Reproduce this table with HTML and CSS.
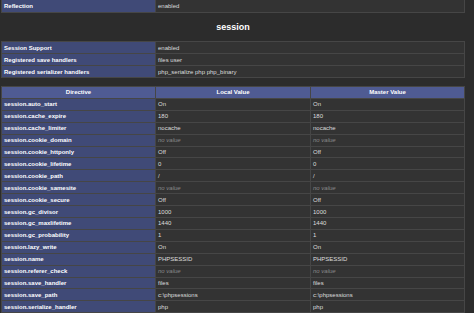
FILE: index.html
```html
<!DOCTYPE html>
<html lang="en">
<head>
<meta charset="utf-8">
<title>phpinfo() - session</title>
<link rel="stylesheet" href="styles.css">
</head>
<body>
<div class="page">
  <div class="info info-2 info-top">
    <div class="cell e">Reflection</div><div class="cell v">enabled</div>
  </div>
  <h2 class="section-title">session</h2>
  <div class="info info-2">
    <div class="cell e">Session Support</div><div class="cell v">enabled</div>
    <div class="cell e">Registered save handlers</div><div class="cell v">files user</div>
    <div class="cell e">Registered serializer handlers</div><div class="cell v">php_serialize php php_binary</div>
  </div>
  <div class="info info-3 directives">
    <div class="cell h">Directive</div><div class="cell h">Local Value</div><div class="cell h">Master Value</div>
    <div class="cell e">session.auto_start</div><div class="cell v">On</div><div class="cell v">On</div>
    <div class="cell e">session.cache_expire</div><div class="cell v">180</div><div class="cell v">180</div>
    <div class="cell e">session.cache_limiter</div><div class="cell v">nocache</div><div class="cell v">nocache</div>
    <div class="cell e">session.cookie_domain</div><div class="cell v"><i>no value</i></div><div class="cell v"><i>no value</i></div>
    <div class="cell e">session.cookie_httponly</div><div class="cell v">Off</div><div class="cell v">Off</div>
    <div class="cell e">session.cookie_lifetime</div><div class="cell v">0</div><div class="cell v">0</div>
    <div class="cell e">session.cookie_path</div><div class="cell v">/</div><div class="cell v">/</div>
    <div class="cell e">session.cookie_samesite</div><div class="cell v"><i>no value</i></div><div class="cell v"><i>no value</i></div>
    <div class="cell e">session.cookie_secure</div><div class="cell v">Off</div><div class="cell v">Off</div>
    <div class="cell e">session.gc_divisor</div><div class="cell v">1000</div><div class="cell v">1000</div>
    <div class="cell e">session.gc_maxlifetime</div><div class="cell v">1440</div><div class="cell v">1440</div>
    <div class="cell e">session.gc_probability</div><div class="cell v">1</div><div class="cell v">1</div>
    <div class="cell e">session.lazy_write</div><div class="cell v">On</div><div class="cell v">On</div>
    <div class="cell e">session.name</div><div class="cell v">PHPSESSID</div><div class="cell v">PHPSESSID</div>
    <div class="cell e">session.referer_check</div><div class="cell v"><i>no value</i></div><div class="cell v"><i>no value</i></div>
    <div class="cell e">session.save_handler</div><div class="cell v">files</div><div class="cell v">files</div>
    <div class="cell e">session.save_path</div><div class="cell v">c:\phpsessions</div><div class="cell v">c:\phpsessions</div>
    <div class="cell e">session.serialize_handler</div><div class="cell v">php</div><div class="cell v">php</div>
  </div>
</div>
</body>
</html>
```

FILE: styles.css
```css
html, body {
  margin: 0;
  padding: 0;
  background: #2c2c2c;
}

body {
  font-family: "Liberation Sans", Arial, Helvetica, sans-serif;
  font-size: 6px;
  color: #dddddd;
  overflow: hidden;
}

.page {
  width: 464px;
  padding-left: 1px;
}

.info {
  display: grid;
  gap: 1px;
  padding: 1px;
  background: #464646;
}

.info-2 {
  grid-template-columns: 153px 1fr;
  grid-auto-rows: 11px;
}

.info-top {
  padding-top: 0;
  grid-auto-rows: 12px;
}

.info-3 {
  grid-template-columns: 153px 154px 153px;
  grid-auto-rows: 10.92px;
}

.directives {
  margin-top: 8px;
}

.section-title {
  margin: 0;
  height: 28px;
  line-height: 28px;
  text-align: center;
  font-size: 9px;
  font-weight: bold;
  color: #ffffff;
}

.cell {
  display: flex;
  align-items: center;
  padding: 0 2px;
  white-space: nowrap;
  overflow: hidden;
  line-height: 1;
}

.e {
  background: #404a77;
  color: #ffffff;
  font-weight: bold;
}

.h {
  background: #4f5b93;
  color: #ffffff;
  font-weight: bold;
  justify-content: center;
}

.v {
  background: #333333;
  color: #dddddd;
}

.v i {
  color: #8a8a8a;
}
```
